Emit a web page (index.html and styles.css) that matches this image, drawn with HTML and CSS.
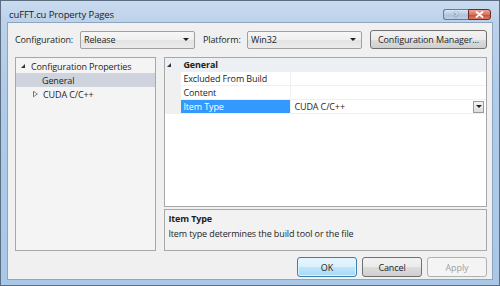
FILE: index.html
```html
<!DOCTYPE html>
<html>
<head>
<meta charset="utf-8">
<link rel="stylesheet" href="styles.css">
</head>
<body>
<div class="window">
  <div class="titlebar">
    <span class="title">cuFFT.cu Property Pages</span>
    <div class="caption-btns">
      <div class="cbtn help">?</div>
      <div class="cbtn close">
        <svg width="9" height="7" viewBox="0 0 9 7"><path d="M1.5 1 L7.5 6 M7.5 1 L1.5 6" stroke="#fff" stroke-width="1.8" stroke-linecap="round"/></svg>
      </div>
    </div>
  </div>
  <div class="client">
    <div class="toolbar">
      <span class="lbl lbl-config">Configuration:</span>
      <div class="combo combo-config"><span>Release</span><span class="arrow"></span></div>
      <span class="lbl lbl-platform">Platform:</span>
      <div class="combo combo-platform"><span>Win32</span><span class="arrow"></span></div>
      <div class="btn btn-mgr">Configuration Manager...</div>
    </div>
    <div class="main">
      <div class="tree">
        <div class="tnode"><span class="exp-filled"></span><span>Configuration Properties</span></div>
        <div class="tnode child selected"><span>General</span></div>
        <div class="tnode child"><span class="exp-open"></span><span>CUDA C/C++</span></div>
      </div>
      <div class="right">
        <div class="grid">
          <div class="grow cat"><span class="gutter"><span class="exp-filled"></span></span><span class="catname">General</span></div>
          <div class="grow"><span class="gutter"></span><span class="pname">Excluded From Build</span><span class="pval"></span></div>
          <div class="grow"><span class="gutter"></span><span class="pname">Content</span><span class="pval"></span></div>
          <div class="grow sel"><span class="gutter"></span><span class="pname">Item Type</span><span class="pval">CUDA C/C++<span class="ddbtn"></span></span></div>
        </div>
        <div class="desc">
          <div class="desc-title">Item Type</div>
          <div class="desc-text">Item type determines the build tool or the file</div>
        </div>
      </div>
    </div>
    <div class="buttons">
      <div class="btn btn-ok">OK</div>
      <div class="btn btn-cancel">Cancel</div>
      <div class="btn btn-apply">Apply</div>
    </div>
  </div>
</div>
</body>
</html>
```
FILE: styles.css
```css
* { box-sizing: border-box; }
html, body { margin: 0; padding: 0; }
body {
  width: 500px; height: 286px; overflow: hidden;
  font-family: "Open Sans", "Liberation Sans", sans-serif;
  font-size: 9px;
  letter-spacing: -0.12px;
  color: #1e1e1e;
}
.window {
  width: 500px; height: 286px;
  border: 1px solid #5d6e82;
  background: linear-gradient(to bottom, #c9dbef 0px, #bcd1ea 22px, #aecbe8 100px, #a9c8e8 286px);
  display: flex; flex-direction: column;
  padding: 0 6px 5px 6px;
}
.titlebar {
  height: 21px; flex: none;
  display: flex; align-items: center; justify-content: space-between;
  padding-left: 2px;
}
.title { font-size: 9.5px; color: #1b1b1b; padding-top: 5px; }
.caption-btns { display: flex; align-self: flex-start; margin-top: 8px; margin-right: 2px; }
.cbtn {
  height: 11px; border: 1px solid #6a7b91;
  display: flex; align-items: center; justify-content: center;
}
.help {
  width: 25px; border-radius: 3px 0 0 3px; border-right: none;
  background: linear-gradient(#d9e6f4, #b6cae3 50%, #a9c0dd 51%, #bcd0e8);
  color: #fff; font-weight: bold; font-size: 9px;
  text-shadow: 0 0 1px #3c4b5e, 0 0 1px #3c4b5e;
}
.close {
  width: 23px; border-radius: 0 3px 3px 0; border-color: #6a2d27;
  background: linear-gradient(#eba596, #d9735f 50%, #c84a34 51%, #dc7a64);
}
.client {
  flex: 1;
  background: #f0f0f0;
  border: 1px solid #8ea5bf;
  padding: 7px 5px 0 7px;
  display: flex; flex-direction: column;
}
.toolbar { display: flex; align-items: center; height: 19px; }
.lbl { white-space: nowrap; }
.lbl-config { width: 65px; }
.lbl-platform { width: 44px; }
.combo {
  height: 18px;
  border: 1px solid #a0a0a0; border-radius: 2px;
  background: linear-gradient(#f7f7f7, #efefef 50%, #e3e3e3 51%, #ebebeb);
  display: flex; align-items: center; justify-content: space-between;
  padding: 0 5px 0 3px;
}
.combo-config { width: 115px; margin-right: 8px; }
.combo-platform { width: 115px; margin-right: 8px; }
.arrow {
  width: 0; height: 0;
  border-left: 3px solid transparent; border-right: 3px solid transparent;
  border-top: 3px solid #1e1e1e;
}
.btn {
  height: 19px;
  border: 1px solid #707070; border-radius: 3px;
  background: linear-gradient(#f2f2f2, #ebebeb 50%, #dddddd 51%, #cfcfcf);
  display: flex; align-items: center; justify-content: center;
  white-space: nowrap;
}
.btn-mgr { width: 117px; }
.main { display: flex; margin-top: 8px; height: 194px; }
.tree {
  width: 142px; height: 194px;
  border: 1px solid #a8a8a8;
  background: #f4f4f4;
  padding-top: 1px;
}
.tnode { height: 14px; display: flex; align-items: center; padding-left: 5px; }
.tnode.child { padding-left: 17px; }
.tnode.child.selected { padding-left: 26px; }
.tnode.selected { background: #cfd3dd; }
.exp-filled {
  width: 0; height: 0; margin-right: 6px;
  border-left: 4px solid transparent; border-bottom: 4px solid #333;
}
.exp-open {
  width: 5px; height: 7px; margin-right: 5px;
  background: #777;
  clip-path: polygon(0 0, 100% 50%, 0 100%);
  position: relative;
}
.exp-open::after {
  content: ""; position: absolute; left: 1px; top: 1.6px;
  width: 2.6px; height: 3.8px; background: #f4f4f4;
  clip-path: polygon(0 0, 100% 50%, 0 100%);
}
.right { width: 324px; margin-left: 8px; display: flex; flex-direction: column; }
.grid {
  height: 151px;
  border: 1px solid #a8a8a8;
  background: #fff;
}
.grow { height: 14px; display: flex; align-items: stretch; border-bottom: 1px solid #f0f0f0; }
.gutter { width: 16px; background: #f0f0f0; display: flex; align-items: center; padding-left: 2px; }
.cat { background: #eceff4; }
.cat .gutter { background: #eceff4; }
.catname { font-weight: bold; display: flex; align-items: center; padding-left: 2px; }
.pname { width: 110px; display: flex; align-items: center; padding-left: 2px; border-right: 1px solid #f0f0f0; }
.pval { flex: 1; display: flex; align-items: center; justify-content: space-between; padding-left: 3px; padding-right: 2px; }
.sel .pname { background: #3399ff; color: #fff; }
.ddbtn {
  width: 11px; height: 12px;
  border: 1px solid #9a9a9a;
  background: linear-gradient(#f4f4f4, #dcdcdc);
  display: flex; align-items: center; justify-content: center;
}
.ddbtn::after {
  content: ""; width: 0; height: 0;
  border-left: 3px solid transparent; border-right: 3px solid transparent;
  border-top: 3px solid #222;
}
.desc {
  margin-top: 2px; height: 42px;
  border: 1px solid #a8a8a8;
  background: #f2f2f2;
  padding: 2px 3px;
}
.desc-title { font-weight: bold; height: 13px; }
.desc-text { margin-top: 2px; }
.buttons { display: flex; justify-content: flex-end; margin-top: 6px; padding-right: 0; }
.btn-ok, .btn-cancel, .btn-apply { width: 60px; height: 20px; margin-left: 5px; }
.btn-ok {
  border-color: #3c7fb1;
  background: linear-gradient(#eaf6fd, #d9f0fc 50%, #bee6fd 51%, #a7d9f5);
  box-shadow: inset 0 0 0 1px #dff3fe;
}
.btn-apply {
  border-color: #adb2b5; background: #f4f4f4; color: #a0a0a0;
}
```
